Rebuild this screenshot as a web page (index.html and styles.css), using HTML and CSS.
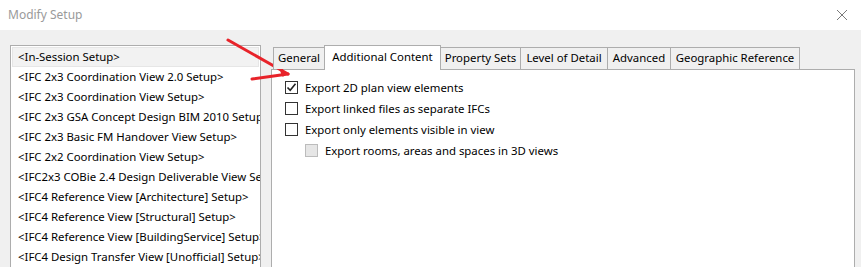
FILE: index.html
```html
<!DOCTYPE html>
<html>
<head>
<meta charset="utf-8">
<link rel="stylesheet" href="styles.css">
</head>
<body>
<div class="window">
  <div class="titlebar">
    <span class="title">Modify Setup</span>
    <svg class="close" width="12" height="12" viewBox="0 0 12 12"><path d="M1 1L11 11M11 1L1 11" stroke="#7a7a7a" stroke-width="1"/></svg>
  </div>
  <div class="content">
    <div class="listbox">
      <div class="item selected">&lt;In-Session Setup&gt;</div>
      <div class="item">&lt;IFC 2x3 Coordination View 2.0 Setup&gt;</div>
      <div class="item">&lt;IFC 2x3 Coordination View Setup&gt;</div>
      <div class="item">&lt;IFC 2x3 GSA Concept Design BIM 2010 Setup&gt;</div>
      <div class="item">&lt;IFC 2x3 Basic FM Handover View Setup&gt;</div>
      <div class="item">&lt;IFC 2x2 Coordination View Setup&gt;</div>
      <div class="item">&lt;IFC2x3 COBie 2.4 Design Deliverable View Setup&gt;</div>
      <div class="item">&lt;IFC4 Reference View [Architecture] Setup&gt;</div>
      <div class="item">&lt;IFC4 Reference View [Structural] Setup&gt;</div>
      <div class="item">&lt;IFC4 Reference View [BuildingService] Setup&gt;</div>
      <div class="item">&lt;IFC4 Design Transfer View [Unofficial] Setup&gt;</div>
    </div>
    <div class="tabctl">
      <div class="tabs">
        <div class="tab t-general">General</div>
        <div class="tab active t-add">Additional Content</div>
        <div class="tab t-prop">Property Sets</div>
        <div class="tab t-lod">Level of Detail</div>
        <div class="tab t-adv">Advanced</div>
        <div class="tab t-geo">Geographic Reference</div>
      </div>
      <div class="panel">
        <div class="opt"><span class="cb checked"><svg width="11" height="11" viewBox="0 0 11 11"><path d="M1.5 5.5L4.2 8.3L9.5 1.8" fill="none" stroke="#222" stroke-width="1.6"/></svg></span>Export 2D plan view elements</div>
        <div class="opt"><span class="cb"></span>Export linked files as separate IFCs</div>
        <div class="opt"><span class="cb"></span>Export only elements visible in view</div>
        <div class="opt sub"><span class="cb disabled"></span>Export rooms, areas and spaces in 3D views</div>
      </div>
    </div>
  </div>
  <svg class="arrow" width="861" height="267" viewBox="0 0 861 267">
    <path d="M228 40L288 74" stroke="#e8232a" stroke-width="3" stroke-linecap="round" fill="none"/>
    <path d="M252 79L288 74" stroke="#e8232a" stroke-width="3" stroke-linecap="round" fill="none"/>
    <path d="M280 64L283 75" stroke="#e8232a" stroke-width="3" stroke-linecap="round" fill="none"/>
  </svg>
</div>
</body>
</html>
```
FILE: styles.css
```css
html, body {
  margin: 0;
  padding: 0;
}
body {
  width: 861px;
  height: 267px;
  overflow: hidden;
  background: #f0f0f0;
  font-family: "Noto Sans", "Open Sans", sans-serif;
  font-size: 11.4px;
  color: #000;
}
.window {
  position: relative;
  width: 861px;
  height: 267px;
  overflow: hidden;
}
.titlebar {
  height: 30px;
  background: #fff;
  display: flex;
  align-items: center;
  justify-content: space-between;
  padding: 0 13px 0 8px;
}
.title {
  color: #9a9a9a;
  font-size: 12px;
  margin-top: -1px;
}
.content {
  display: flex;
  align-items: flex-start;
  padding: 15px 0 0 10px;
}
.listbox {
  width: 249px;
  height: 220px;
  background: #fff;
  border: 1px solid #adadad;
  border-bottom: none;
  padding-top: 1px;
  overflow: hidden;
  flex: none;
}
.item {
  height: 20px;
  line-height: 20px;
  padding-left: 7px;
  white-space: nowrap;
  overflow: hidden;
}
.item.selected {
  background: #f2f2f2;
  margin: 0 1px;
  padding-left: 6px;
  box-shadow: inset 0 0 0 1px #e6e6e6;
}
.tabctl {
  margin-left: 10px;
  width: 584px;
  flex: none;
}
.tabs {
  display: flex;
  align-items: flex-end;
  height: 24px;
  padding-left: 2px;
  position: relative;
  z-index: 1;
}
.tab {
  height: 22px;
  line-height: 20px;
  border: 1px solid #adadad;
  border-bottom: none;
  margin-left: -1px;
  text-align: center;
  background: #f0f0f0;
  white-space: nowrap;
  box-sizing: border-box;
}
.tab.active {
  background: #fff;
  height: 25px;
  line-height: 22px;
  margin-bottom: -1px;
}
.t-general { width: 52px; margin-left: 0; }
.t-add { width: 117px; }
.t-prop { width: 81px; }
.t-lod { width: 88px; }
.t-adv { width: 64px; }
.t-geo { width: 130px; }
.panel {
  background: #fff;
  border: 1px solid #adadad;
  border-bottom: none;
  height: 187px;
  padding: 11px 0 0 13px;
}
.opt {
  display: flex;
  align-items: center;
  height: 13px;
  margin-bottom: 8px;
  white-space: nowrap;
}
.opt.sub {
  padding-left: 20px;
  margin-top: 1px;
}
.cb {
  width: 11px;
  height: 11px;
  border: 1px solid #333;
  background: #fff;
  margin-right: 7px;
  flex: none;
  display: flex;
  align-items: center;
  justify-content: center;
}
.cb.disabled {
  background: #e6e6e6;
  border-color: #bcbcbc;
}
.arrow {
  position: absolute;
  left: 0;
  top: 0;
  pointer-events: none;
}
```
